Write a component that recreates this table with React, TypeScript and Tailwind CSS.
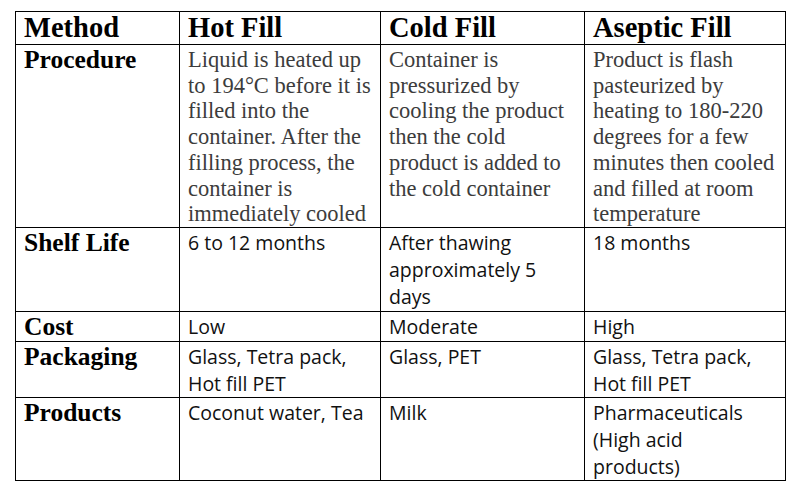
import React from 'react';

type Kind = 'serif' | 'sans';

interface Row {
  label: string;
  height: string;
  kind: Kind;
  cells: string[];
}

const rows: Row[] = [
  {
    label: 'Procedure',
    height: 'h-[182px]',
    kind: 'serif',
    cells: [
      'Liquid is heated up to 194°C before it is filled into the container. After the filling process, the container is immediately cooled',
      'Container is pressurized by cooling the product then the cold product is added to the cold container',
      'Product is flash pasteurized by heating to 180-220 degrees for a few minutes then cooled and filled at room temperature',
    ],
  },
  {
    label: 'Shelf Life',
    height: 'h-[84px]',
    kind: 'sans',
    cells: ['6 to 12 months', 'After thawing approximately 5 days', '18 months'],
  },
  { label: 'Cost', height: 'h-[30px]', kind: 'sans', cells: ['Low', 'Moderate', 'High'] },
  {
    label: 'Packaging',
    height: 'h-[56px]',
    kind: 'sans',
    cells: ['Glass, Tetra pack, Hot fill PET', 'Glass, PET', 'Glass, Tetra pack, Hot fill PET'],
  },
  {
    label: 'Products',
    height: 'h-[83px]',
    kind: 'sans',
    cells: ['Coconut water, Tea', 'Milk', 'Pharmaceuticals (High acid products)'],
  },
];

const serif = "font-['Liberation_Serif',serif]";

export default function App() {
  return (
    <div className="w-[806px] h-[492px] bg-white pt-[11px] pl-[15px]">
      <table className="table-fixed border-collapse w-[770px]">
        <colgroup>
          <col className="w-[164px]" />
          <col className="w-[201px]" />
          <col className="w-[204px]" />
          <col className="w-[201px]" />
        </colgroup>
        <thead>
          <tr className="h-[33px]">
            {['Method', 'Hot Fill', 'Cold Fill', 'Aseptic Fill'].map((h) => (
              <th
                key={h}
                className={`${serif} border border-black text-left align-top font-bold text-[28.5px] leading-[32px] px-[8px] text-black`}
              >
                {h}
              </th>
            ))}
          </tr>
        </thead>
        <tbody>
          {rows.map((r) => (
            <tr key={r.label} className={r.height}>
              <td
                className={`${serif} border border-black align-top font-bold text-[25.5px] leading-[25.5px] pt-[2px] px-[8px] text-black`}
              >
                {r.label}
              </td>
              {r.cells.map((c, i) => (
                <td
                  key={i}
                  className={
                    r.kind === 'serif'
                      ? `${serif} border border-black align-top text-[22.5px] leading-[25.7px] pt-[2px] pl-[8px] pr-[6px] text-[#3c3c3c]`
                      : "font-['Open_Sans',sans-serif] border border-black align-top text-[19.5px] leading-[27px] pt-[1px] pl-[8px] pr-[14px] text-[#111]"
                  }
                >
                  {c}
                </td>
              ))}
            </tr>
          ))}
        </tbody>
      </table>
    </div>
  );
}
